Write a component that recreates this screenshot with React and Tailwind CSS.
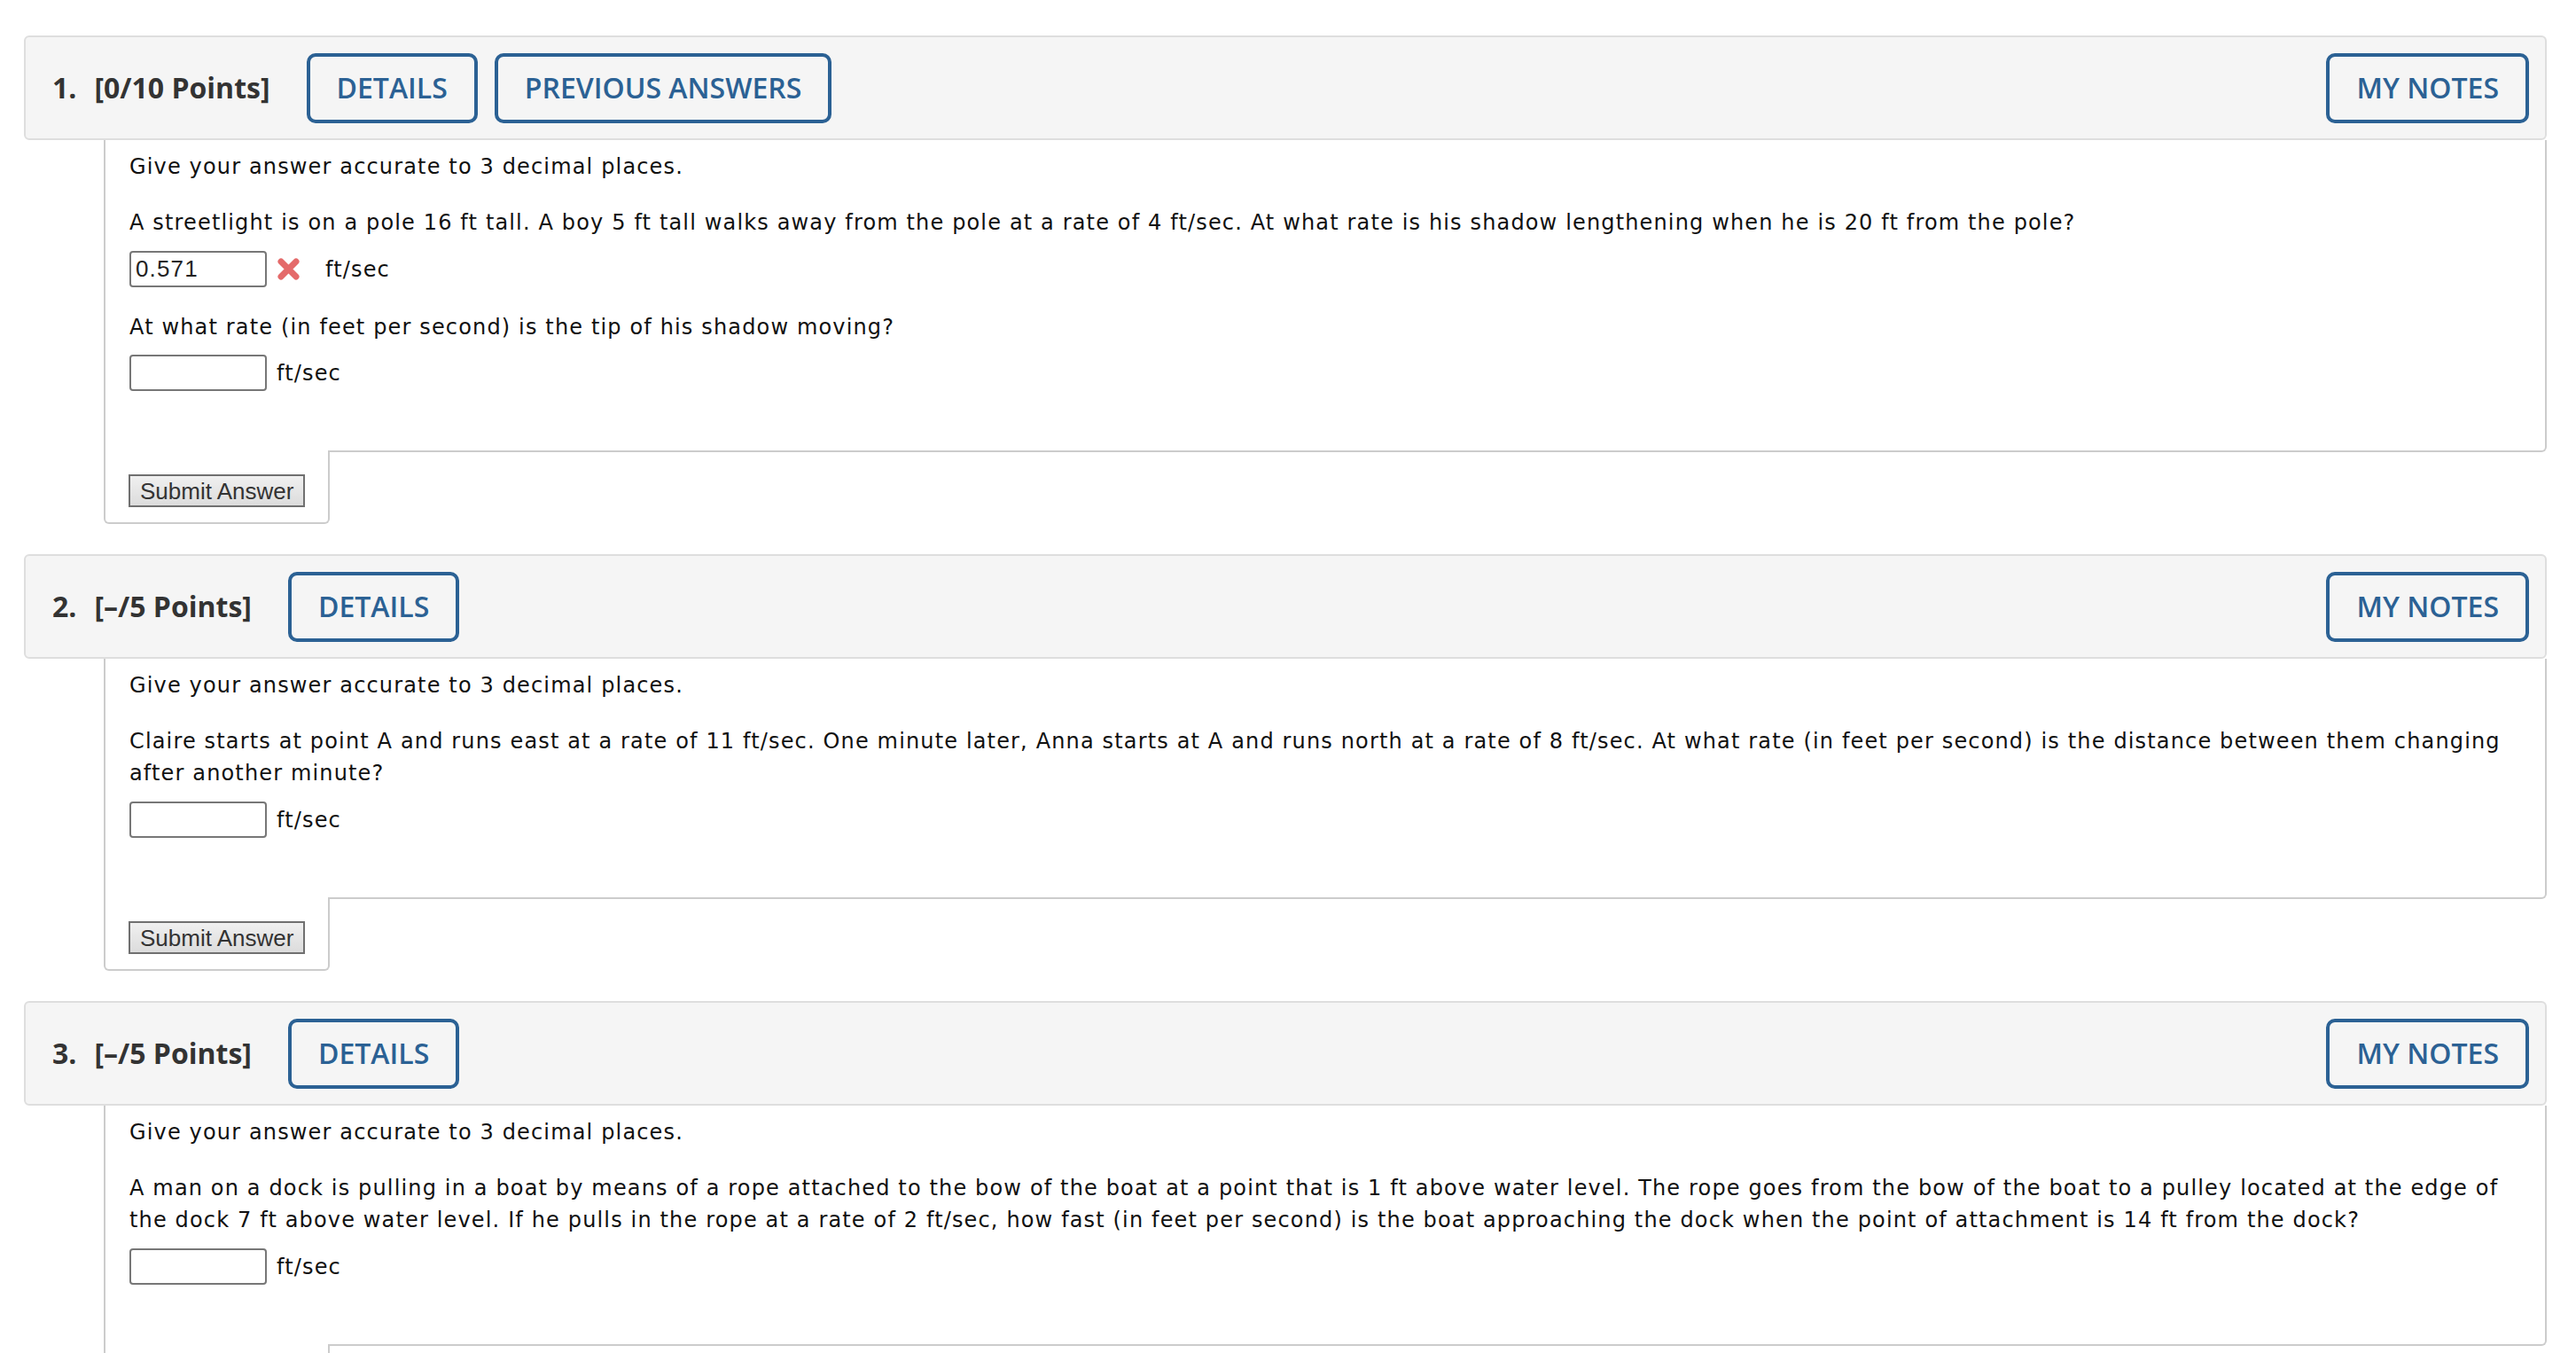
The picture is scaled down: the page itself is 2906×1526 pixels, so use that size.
import React from 'react';

const questions = [
  {
    num: '1.',
    points: '[0/10 Points]',
    prev: true,
    parts: [
      {
        text: 'A streetlight is on a pole 16 ft tall. A boy 5 ft tall walks away from the pole at a rate of 4 ft/sec. At what rate is his shadow lengthening when he is 20 ft from the pole?',
        value: '0.571',
        wrong: true,
      },
      { text: 'At what rate (in feet per second) is the tip of his shadow moving?', value: '' },
    ],
  },
  {
    num: '2.',
    points: '[\u2013/5 Points]',
    parts: [
      {
        text: 'Claire starts at point A and runs east at a rate of 11 ft/sec. One minute later, Anna starts at A and runs north at a rate of 8 ft/sec. At what rate (in feet per second) is the distance between them changing after another minute?',
        value: '',
      },
    ],
  },
  {
    num: '3.',
    points: '[\u2013/5 Points]',
    parts: [
      {
        text: 'A man on a dock is pulling in a boat by means of a rope attached to the bow of the boat at a point that is 1 ft above water level. The rope goes from the bow of the boat to a pulley located at the edge of the dock 7 ft above water level. If he pulls in the rope at a rate of 2 ft/sec, how fast (in feet per second) is the boat approaching the dock when the point of attachment is 14 ft from the dock?',
        value: '',
      },
    ],
  },
];

const HeaderButton = ({ children }) => (
  <button className="h-[79px] px-[30px] border-[4px] border-[#2b6194] rounded-[10px] text-[#2b6194] text-[32px] font-semibold leading-none">
    {children}
  </button>
);

const WrongMark = () => (
  <svg className="ml-[11px] w-[27px] h-[27px]" viewBox="0 0 27 27">
    <path d="M5 5L22 22M22 5L5 22" stroke="#e46a6a" strokeWidth="7" strokeLinecap="round" />
  </svg>
);

const AnswerRow = ({ value, wrong, className }) => (
  <div className={`flex items-center ${className}`}>
    <input
      readOnly
      value={value}
      className="w-[155px] h-[41px] border-2 border-[#777] rounded-[4px] px-[5px] text-[26px] text-[#222] bg-white outline-none"
      style={{ fontFamily: '"Liberation Sans", Arial, sans-serif' }}
    />
    {wrong && <WrongMark />}
    <span className={wrong ? 'ml-[28px]' : 'ml-[11px]'}>ft/sec</span>
  </div>
);

const Question = ({ q }) => (
  <div className="mb-[34px]">
    {/* Header bar */}
    <div
      className="h-[118px] flex items-center justify-between pl-[30px] pr-[18px] bg-[#f5f5f5] border-2 border-[#dedede] rounded-[6px]"
      style={{ fontFamily: '"Open Sans", sans-serif' }}
    >
      <div className="flex items-center">
        <span className="text-[32px] font-bold text-[#333]">
          {q.num}
          <span className="ml-[20px]">{q.points}</span>
        </span>
        <div className="flex items-center gap-[19px] ml-[41px]">
          <HeaderButton>DETAILS</HeaderButton>
          {q.prev && <HeaderButton>PREVIOUS ANSWERS</HeaderButton>}
        </div>
      </div>
      <HeaderButton>MY NOTES</HeaderButton>
    </div>

    {/* Question body */}
    <div
      className="ml-[90px] text-[24px] leading-[36px] tracking-[1.15px] text-[#111]"
      style={{ fontFamily: 'Verdana, "DejaVu Sans", sans-serif' }}
    >
      <div className="pt-[12px] pb-[67px] pl-[27px] pr-[30px] border-l-2 border-r-2 border-b-2 border-[#cccccc] rounded-br-[6px]">
        <p className="mb-[27px]">Give your answer accurate to 3 decimal places.</p>
        {q.parts.map((part, i) => (
          <div key={i} className={i > 0 ? 'mt-[27px]' : ''}>
            <p>{part.text}</p>
            <AnswerRow value={part.value} wrong={part.wrong} className={i > 0 ? 'mt-[13px]' : 'mt-[14px]'} />
          </div>
        ))}
      </div>
      <div className="-mt-[2px] w-[255px] h-[83px] bg-white border-l-2 border-r-2 border-b-2 border-[#cccccc] rounded-b-[6px] pl-[26px] pt-[27px]">
        <button
          className="h-[37px] px-[11px] border-2 border-[#707070] bg-gradient-to-b from-[#f0f0f0] to-[#dcdcdc] text-[26px] leading-none tracking-normal text-[#333]"
          style={{ fontFamily: '"Liberation Sans", Arial, sans-serif' }}
        >
          Submit Answer
        </button>
      </div>
    </div>
  </div>
);

export default function App() {
  return (
    <div className="min-h-screen bg-white pt-[40px] pl-[27px] pr-[33px]">
      {questions.map((q) => (
        <Question key={q.num} q={q} />
      ))}
    </div>
  );
}
